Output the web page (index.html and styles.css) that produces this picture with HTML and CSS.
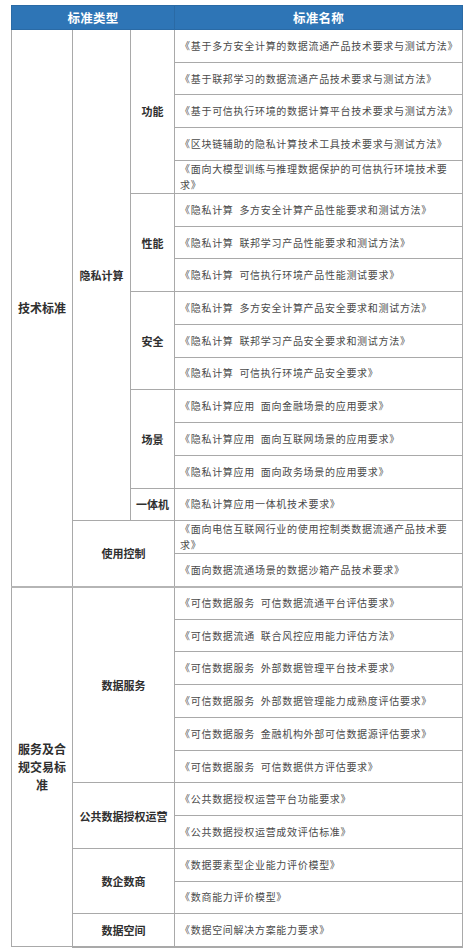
FILE: index.html
```html
<!DOCTYPE html>
<html lang="zh">
<head>
<meta charset="utf-8">
<title>标准</title>
<link rel="stylesheet" href="styles.css">
</head>
<body>
<table class="std">
  <colgroup>
    <col class="c1"><col class="c2"><col class="c3"><col class="c4">
  </colgroup>
  <thead>
    <tr class="head">
      <th colspan="3">标准类型</th>
      <th>标准名称</th>
    </tr>
  </thead>
  <tbody>
    <tr>
      <td rowspan="17" class="cat1">技术标准</td>
      <td rowspan="15" class="cat">隐私计算</td>
      <td rowspan="5" class="cat">功能</td>
      <td class="name">《基于多方安全计算的数据流通产品技术要求与测试方法》</td>
    </tr>
    <tr><td class="name">《基于联邦学习的数据流通产品技术要求与测试方法》</td></tr>
    <tr><td class="name">《基于可信执行环境的数据计算平台技术要求与测试方法》</td></tr>
    <tr><td class="name">《区块链辅助的隐私计算技术工具技术要求与测试方法》</td></tr>
    <tr><td class="name">《面向大模型训练与推理数据保护的可信执行环境技术要求》</td></tr>
    <tr>
      <td rowspan="3" class="cat">性能</td>
      <td class="name">《隐私计算&nbsp;&nbsp;多方安全计算产品性能要求和测试方法》</td>
    </tr>
    <tr><td class="name">《隐私计算&nbsp;&nbsp;联邦学习产品性能要求和测试方法》</td></tr>
    <tr><td class="name">《隐私计算&nbsp;&nbsp;可信执行环境产品性能测试要求》</td></tr>
    <tr>
      <td rowspan="3" class="cat">安全</td>
      <td class="name">《隐私计算&nbsp;&nbsp;多方安全计算产品安全要求和测试方法》</td>
    </tr>
    <tr><td class="name">《隐私计算&nbsp;&nbsp;联邦学习产品安全要求和测试方法》</td></tr>
    <tr><td class="name">《隐私计算&nbsp;&nbsp;可信执行环境产品安全要求》</td></tr>
    <tr>
      <td rowspan="3" class="cat">场景</td>
      <td class="name">《隐私计算应用&nbsp;&nbsp;面向金融场景的应用要求》</td>
    </tr>
    <tr><td class="name">《隐私计算应用&nbsp;&nbsp;面向互联网场景的应用要求》</td></tr>
    <tr><td class="name">《隐私计算应用&nbsp;&nbsp;面向政务场景的应用要求》</td></tr>
    <tr>
      <td class="cat">一体机</td>
      <td class="name">《隐私计算应用一体机技术要求》</td>
    </tr>
    <tr>
      <td rowspan="2" colspan="2" class="cat">使用控制</td>
      <td class="name">《面向电信互联网行业的使用控制类数据流通产品技术要求》</td>
    </tr>
    <tr><td class="name">《面向数据流通场景的数据沙箱产品技术要求》</td></tr>
    <tr class="sect">
      <td rowspan="11" class="cat1">服务及合规交易标准</td>
      <td rowspan="6" colspan="2" class="cat">数据服务</td>
      <td class="name">《可信数据服务&nbsp;&nbsp;可信数据流通平台评估要求》</td>
    </tr>
    <tr><td class="name">《可信数据流通&nbsp;&nbsp;联合风控应用能力评估方法》</td></tr>
    <tr><td class="name">《可信数据服务&nbsp;&nbsp;外部数据管理平台技术要求》</td></tr>
    <tr><td class="name">《可信数据服务&nbsp;&nbsp;外部数据管理能力成熟度评估要求》</td></tr>
    <tr><td class="name">《可信数据服务&nbsp;&nbsp;金融机构外部可信数据源评估要求》</td></tr>
    <tr><td class="name">《可信数据服务&nbsp;&nbsp;可信数据供方评估要求》</td></tr>
    <tr>
      <td rowspan="2" colspan="2" class="cat">公共数据授权运营</td>
      <td class="name">《公共数据授权运营平台功能要求》</td>
    </tr>
    <tr><td class="name">《公共数据授权运营成效评估标准》</td></tr>
    <tr>
      <td rowspan="2" colspan="2" class="cat">数企数商</td>
      <td class="name">《数据要素型企业能力评价模型》</td>
    </tr>
    <tr><td class="name">《数商能力评价模型》</td></tr>
    <tr class="last">
      <td colspan="2" class="cat">数据空间</td>
      <td class="name">《数据空间解决方案能力要求》</td>
    </tr>
  </tbody>
</table>
</body>
</html>
```

FILE: styles.css
```css
html, body {
  background: #ffffff;
}
body {
  margin: 5px 0 0 11px;
  font-family: "Noto Sans CJK SC", "Noto Sans", sans-serif;
  color: #3a3a3a;
}
.std {
  border-collapse: collapse;
  table-layout: fixed;
  width: 451px;
}
.c1 { width: 61px; }
.c2 { width: 58px; }
.c3 { width: 44px; }
.c4 { width: 288px; }

.std th, .std td {
  border: 1px solid #a9a9a9;
  padding: 0;
  vertical-align: middle;
}
.head {
  height: 24px;
}
.head th {
  background: #2e75b6;
  color: #ffffff;
  font-size: 12.5px;
  font-weight: 700;
  text-align: center;
  border-color: #2a6aa5;
  letter-spacing: 0.3px;
}
.std tbody tr {
  height: 32.74px;
}
.name {
  font-size: 10px;
  letter-spacing: 0.7px;
  line-height: 16px;
  padding: 0 2px 0 5px !important;
  color: #4a4a4a;
}
.cat {
  font-size: 11px;
  font-weight: 600;
  text-align: center;
  color: #2f2f2f;
  line-height: 16px;
}
.cat1 {
  font-size: 12px;
  font-weight: 600;
  text-align: center;
  color: #2f2f2f;
  line-height: 18px;
  padding: 0 5px !important;
}
.sect td {
  border-top: 2px solid #b5b5b5;
}
.last td {
  border-bottom: 2px solid #a9a9a9;
}
```
